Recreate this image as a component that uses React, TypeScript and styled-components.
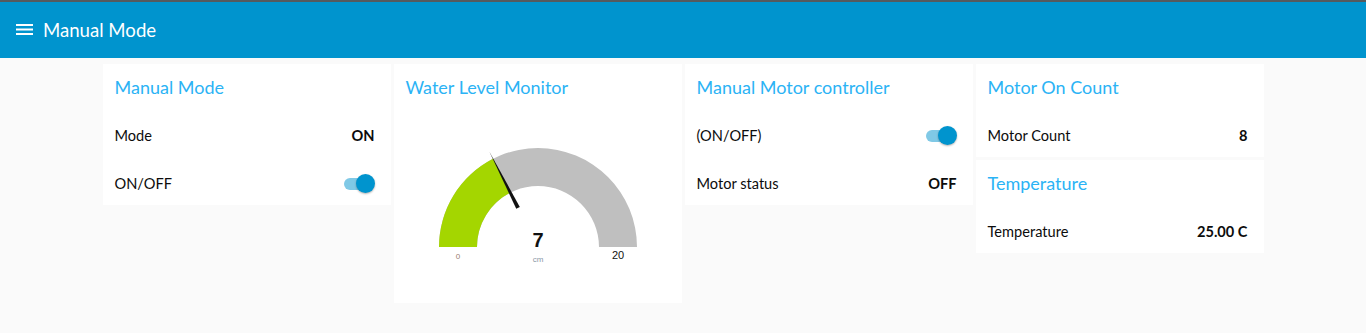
import React from 'react';
import styled, {createGlobalStyle} from 'styled-components';

const GlobalStyle = createGlobalStyle`
  html, body {
    margin: 0;
    padding: 0;
    background: #fafafa;
    font-family: Lato, "Open Sans", sans-serif;
    color: #111;
  }
`;

const Toolbar = styled.header`
  height: 56px;
  border-top: 2px solid #555a5e;
  background: #0094ce;
  display: flex;
  align-items: center;
  padding-left: 16px;
  gap: 9px;
  color: #fff;
`;

const ToolbarTitle = styled.h1`
  margin: 0;
  font-size: 18.6px;
  font-weight: 400;
`;

const Main = styled.main`
  display: flex;
  justify-content: center;
  align-items: flex-start;
  gap: 3px;
  padding-top: 6px;
`;

const Column = styled.div`
  width: 288px;
  display: flex;
  flex-direction: column;
  gap: 3px;
`;

const Card = styled.section<{$height?: number}>`
  background: #fff;
  padding: 0 16px 0 12px;
  ${p => p.$height ? `height: ${p.$height}px;` : ''}
  box-sizing: border-box;
`;

const CardTitle = styled.h2`
  margin: 0;
  height: 48px;
  padding-top: 13px;
  box-sizing: border-box;
  font-size: 18px;
  line-height: 20px;
  font-weight: 400;
  color: #2bb3f5;
`;

const Row = styled.div`
  height: 48px;
  box-sizing: border-box;
  padding-top: 14px;
  display: flex;
  justify-content: space-between;
  align-items: flex-start;
  font-size: 14.6px;
  line-height: 20px;
  color: #0c0c0c;

  &:last-child {
    height: 45px;
  }
`;

const Value = styled.span`
  font-weight: 700;
`;

const Toggle = styled.span`
  position: relative;
  width: 31px;
  height: 20px;
  display: inline-block;
`;

const Track = styled.span`
  position: absolute;
  left: 0;
  top: 4px;
  width: 28px;
  height: 12px;
  border-radius: 6px;
  background: #80c9e6;
`;

const Knob = styled.span`
  position: absolute;
  right: 0;
  top: 0;
  width: 19px;
  height: 19px;
  border-radius: 50%;
  background: #0094ce;
  box-shadow: 0 1px 2px rgba(0, 0, 0, 0.3);
`;

const GaugeSvg = styled.svg`
  display: block;
  margin: 0 -16px 0 -12px;
`;

function MenuIcon() {
  return <svg width="18" height="14" viewBox="0 0 18 14">
    <g stroke="#fff" strokeWidth="2">
      <line x1="0" y1="2" x2="17" y2="2"/>
      <line x1="0" y1="6.5" x2="17" y2="6.5"/>
      <line x1="0" y1="11" x2="17" y2="11"/>
    </g>
  </svg>
}

function Switch() {
  return <Toggle>
    <Track/>
    <Knob/>
  </Toggle>
}

function Gauge({value, min, max, unit}: {value: number; min: number; max: number; unit: string}) {
  const cx = 144, cy = 135, R = 99, r = 61;
  const a = ((value - min) / (max - min)) * Math.PI;
  const px = (rad: number) => cx - rad * Math.cos(a);
  const py = (rad: number) => cy - rad * Math.sin(a);
  const ux = -Math.cos(a), uy = -Math.sin(a);
  const nx = -uy, ny = ux;
  const bx = cx + ux * 44, by = cy + uy * 44;
  const tx = cx + ux * 107, ty = cy + uy * 107;
  
  return <GaugeSvg width="288" height="191" viewBox="0 0 288 191">
    <path d={`M ${cx - R} ${cy} A ${R} ${R} 0 0 1 ${cx + R} ${cy} L ${cx + r} ${cy} A ${r} ${r} 0 0 0 ${cx - r} ${cy} Z`} fill="#bfbfbf"/>
    <path d={`M ${cx - R} ${cy} A ${R} ${R} 0 0 1 ${px(R)} ${py(R)} L ${px(r)} ${py(r)} A ${r} ${r} 0 0 0 ${cx - r} ${cy} Z`} fill="#a4d600"/>
    <polygon points={`${bx + nx * 2},${by + ny * 2} ${bx - nx * 2},${by - ny * 2} ${tx},${ty}`} fill="#111"/>
    <g fontFamily="Arial, 'Liberation Sans', sans-serif" textAnchor="middle">
      <text x={cx} y={cy} fontSize="20" fontWeight="700" fill="#111">{value}</text>
      <text x={cx} y={cy + 15} fontSize="8" fill="#8a98a6">{unit}</text>
      <text x={64} y={cy + 12} fontSize="8" fill="#9a8070">{min}</text>
      <text x={224} y={cy + 12} fontSize="11" fill="#111">{max}</text>
    </g>
  </GaugeSvg>
}

export default function App() {
  return <>
    <GlobalStyle/>
    <Toolbar>
      <MenuIcon/>
      <ToolbarTitle>Manual Mode</ToolbarTitle>
    </Toolbar>
    <Main>
      <Column>
        <Card>
          <CardTitle>Manual Mode</CardTitle>
          <Row><span>Mode</span><Value>ON</Value></Row>
          <Row><span>ON/OFF</span><Switch/></Row>
        </Card>
      </Column>
      <Column>
        <Card $height={239}>
          <CardTitle>Water Level Monitor</CardTitle>
          <Gauge value={7} min={0} max={20} unit="cm"/>
        </Card>
      </Column>
      <Column>
        <Card>
          <CardTitle>Manual Motor controller</CardTitle>
          <Row><span>(ON/OFF)</span><Switch/></Row>
          <Row><span>Motor status</span><Value>OFF</Value></Row>
        </Card>
      </Column>
      <Column>
        <Card>
          <CardTitle>Motor On Count</CardTitle>
          <Row><span>Motor Count</span><Value>8</Value></Row>
        </Card>
        <Card>
          <CardTitle>Temperature</CardTitle>
          <Row><span>Temperature</span><Value>25.00 C</Value></Row>
        </Card>
      </Column>
    </Main>
  </>
}
